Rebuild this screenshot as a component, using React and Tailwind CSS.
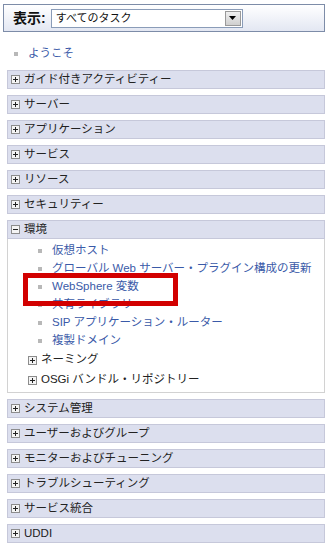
import React from "react";

const FONT = { fontFamily: '"Liberation Sans", "Noto Sans CJK JP", sans-serif' };

const groupsTop = [
  "ガイド付きアクティビティー",
  "サーバー",
  "アプリケーション",
  "サービス",
  "リソース",
  "セキュリティー",
];

const groupsBottom = [
  "システム管理",
  "ユーザーおよびグループ",
  "モニターおよびチューニング",
  "トラブルシューティング",
  "サービス統合",
  "UDDI",
];

const envLinks = [
  "仮想ホスト",
  "グローバル Web サーバー・プラグイン構成の更新",
  "WebSphere 変数",
  "共有ライブラリ",
  "SIP アプリケーション・ルーター",
  "複製ドメイン",
];

const ToggleBox = ({ open }) => (
  <span className="flex h-[9px] w-[9px] shrink-0 items-center justify-center border border-[#8c8c8c] bg-[#f4f4f4]">
    <svg width="7" height="7" viewBox="0 0 7 7">
      <rect x="1" y="3" width="5" height="1" fill="#222" />
      {!open && <rect x="3" y="1" width="1" height="5" fill="#222" />}
    </svg>
  </span>
);

const Bullet = () => <span className="h-[4px] w-[4px] shrink-0 bg-[#b8b8b8]" />;

const GroupBar = ({ label, open }) => (
  <div className="flex h-[19px] items-center gap-[4px] border border-[#c6c8da] bg-[#dcdfee] pl-[3px] text-[11.5px] text-[#222]">
    <ToggleBox open={open} />
    <span className="leading-none">{label}</span>
  </div>
);

export default function App() {
  return (
    <div className="h-[550px] w-[334px] bg-white" style={FONT}>
      <div className="ml-[3px] mt-[4px] flex h-[28px] w-[322px] items-center border border-[#7d8ca8] bg-gradient-to-b from-white to-[#e3e7f2] pl-[9px]">
        <span className="text-[14px] font-bold text-[#111]">表示:</span>
        <div className="ml-[5px] flex h-[19px] w-[192px] items-center justify-between border border-[#8a9cb8] bg-white pl-[4px] pr-[1px]">
          <span className="text-[11px] leading-none text-[#111]">すべてのタスク</span>
          <span className="flex h-[15px] w-[16px] items-center justify-center border border-[#9a9a9a] bg-gradient-to-b from-[#f0f0f0] to-[#cfcfcf]">
            <svg width="7" height="4" viewBox="0 0 7 4">
              <path d="M0 0h7L3.5 4z" fill="#000" />
            </svg>
          </span>
        </div>
      </div>

      <div className="ml-[14px] mt-[15px] flex h-[14px] items-center gap-[10px]">
        <Bullet />
        <span className="text-[11.5px] text-[#3a5aa8]">ようこそ</span>
      </div>

      <div className="ml-[7px] mt-[9px] flex w-[318px] flex-col gap-[6px]">
        {groupsTop.map((g) => (
          <GroupBar key={g} label={g} />
        ))}

        <div>
          <GroupBar label="環境" open />
          <div className="relative flex flex-col border-x border-b border-[#d2d2d2] pb-[2px] pt-[3px]">
            {envLinks.map((l) => (
              <div key={l} className="flex h-[18px] items-center gap-[10px] pl-[30px]">
                <Bullet />
                <span className="whitespace-nowrap text-[11.5px] leading-none text-[#3a5aa8]">{l}</span>
              </div>
            ))}
            {["ネーミング", "OSGi バンドル・リポジトリー"].map((l) => (
              <div key={l} className="flex h-[20px] items-center gap-[4px] pl-[20px] text-[11.5px] text-[#222]">
                <ToggleBox />
                <span className="leading-none">{l}</span>
              </div>
            ))}
            <div className="absolute left-[15px] top-[34px] h-[33px] w-[155px] border-[5px] border-[#d20000]" />
          </div>
        </div>

        <div className="flex flex-col gap-[6px]">
          {groupsBottom.map((g) => (
            <GroupBar key={g} label={g} />
          ))}
        </div>
      </div>
    </div>
  );
}
